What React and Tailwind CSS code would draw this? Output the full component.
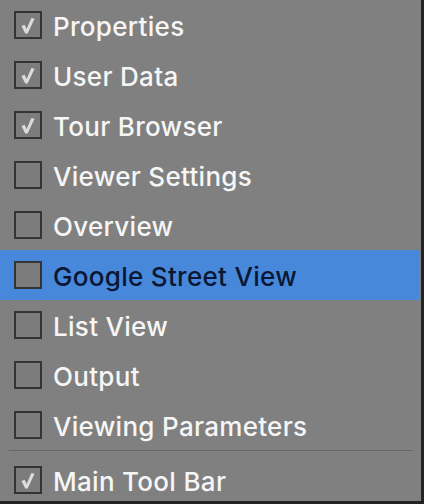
import React from "react";

const items = [
  { label: "Properties", checked: true },
  { label: "User Data", checked: true },
  { label: "Tour Browser", checked: true },
  { label: "Viewer Settings", checked: false },
  { label: "Overview", checked: false },
  { label: "Google Street View", checked: false, active: true },
  { label: "List View", checked: false },
  { label: "Output", checked: false },
  { label: "Viewing Parameters", checked: false },
];

function Box({ checked }) {
  return (
    <div className="w-[28px] h-[28px] shrink-0 border-2 border-[#343434] bg-[#7c7c7c] flex items-center justify-center">
      {checked && (
        <svg width="24" height="24" viewBox="0 0 24 24">
          <path d="M5.5 13 L8.6 11.8 L10.6 16 L15.4 5 L18.6 5.8 L11.6 20.5 L9.2 20.5 Z" fill="#dcdcdc" />
        </svg>
      )}
    </div>
  );
}

function Row({ label, checked, active }) {
  return (
    <div
      className={`h-[50px] flex items-center gap-[11px] pl-[14px] mr-[2px] ${
        active ? "bg-[#4788db] text-[#0a1733]" : "text-[#f6f6f6]"
      }`}
    >
      <Box checked={checked} />
      <span className="text-[26px] leading-none font-medium tracking-[0.3px] pt-[3px]">{label}</span>
    </div>
  );
}

export default function App() {
  return (
    <div
      className="w-[424px] h-[504px] bg-[#232323] overflow-hidden"
      style={{ fontFamily: "Inter, 'Liberation Sans', sans-serif" }}
    >
      <div className="w-[421px] h-[501px] bg-[#808080] overflow-hidden">
        {items.map((it) => (
          <Row key={it.label} {...it} />
        ))}
        <div className="h-[5px] mx-[9px] mr-[8px] border-t border-[#686868]"></div>
        <Row label="Main Tool Bar" checked />
      </div>
    </div>
  );
}
